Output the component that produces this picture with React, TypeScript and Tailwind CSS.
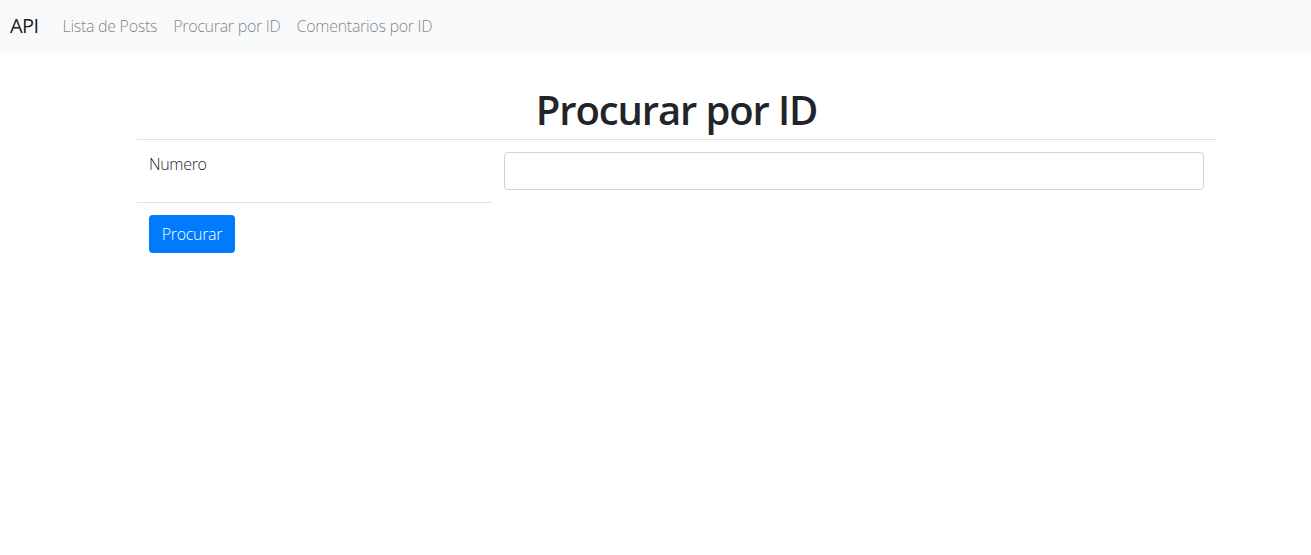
import React from "react";

export default function App() {
  const font = { fontFamily: '"Open Sans", "Noto Sans", sans-serif' };
  return (
    <div className="min-h-[555px] bg-white text-[#212529]" style={font}>
      <nav className="flex h-[53px] items-center bg-[#f8f9fa] pl-[10px] pb-[2px]">
        <span className="mr-[16px] text-[20px] tracking-[-0.03em] text-[rgba(0,0,0,0.9)]">API</span>
        <div className="flex text-[16px] font-light tracking-[-0.018em] text-[rgba(0,0,0,0.5)]">
          <span className="px-[8px]">Lista de Posts</span>
          <span className="px-[8px]">Procurar por ID</span>
          <span className="px-[8px]">Comentarios por ID</span>
        </div>
      </nav>
      <div className="pl-[137px]">
        <div className="w-[1079px]">
          <h1 className="mt-[33px] mb-[5px] text-center text-[40px] font-semibold leading-[48px] tracking-[-0.028em]">
            Procurar por ID
          </h1>
          <div className="flex border-t border-[#dee2e6]">
            <div className="w-[355px] p-[12px] text-[16px] font-light leading-[24px] tracking-[-0.02em]">Numero</div>
            <div className="flex-1 p-[12px]">
              <input
                type="text"
                className="block h-[38px] w-full rounded-[4px] border border-[#ced4da] px-[12px] outline-none"
              />
            </div>
          </div>
          <div className="flex">
            <div className="w-[355px] border-t border-[#dee2e6] p-[12px]">
              <button className="h-[38px] w-[86px] rounded-[4px] bg-[#007bff] text-[16px] font-light tracking-[-0.02em] text-white">
                Procurar
              </button>
            </div>
          </div>
        </div>
      </div>
    </div>
  );
}
